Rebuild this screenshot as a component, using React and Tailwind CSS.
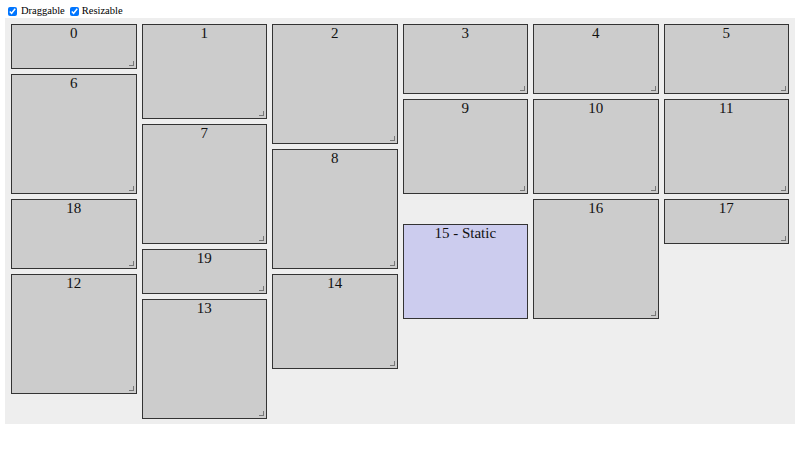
import React from "react";

const items = [
  { id: "0", cls: "col-start-1 row-start-1 row-span-2" },
  { id: "6", cls: "col-start-1 row-start-3 row-span-5" },
  { id: "18", cls: "col-start-1 row-start-8 row-span-3" },
  { id: "12", cls: "col-start-1 row-start-11 row-span-5" },
  { id: "1", cls: "col-start-2 row-start-1 row-span-4" },
  { id: "7", cls: "col-start-2 row-start-5 row-span-5" },
  { id: "19", cls: "col-start-2 row-start-10 row-span-2" },
  { id: "13", cls: "col-start-2 row-start-12 row-span-5" },
  { id: "2", cls: "col-start-3 row-start-1 row-span-5" },
  { id: "8", cls: "col-start-3 row-start-6 row-span-5" },
  { id: "14", cls: "col-start-3 row-start-11 row-span-4" },
  { id: "3", cls: "col-start-4 row-start-1 row-span-3" },
  { id: "9", cls: "col-start-4 row-start-4 row-span-4" },
  { id: "15 - Static", cls: "col-start-4 row-start-9 row-span-4", static: true },
  { id: "4", cls: "col-start-5 row-start-1 row-span-3" },
  { id: "10", cls: "col-start-5 row-start-4 row-span-4" },
  { id: "16", cls: "col-start-5 row-start-8 row-span-5" },
  { id: "5", cls: "col-start-6 row-start-1 row-span-3" },
  { id: "11", cls: "col-start-6 row-start-4 row-span-4" },
  { id: "17", cls: "col-start-6 row-start-8 row-span-2" },
];

function GridItem({ item }) {
  return (
    <div
      className={
        item.cls +
        " relative border border-[#333] text-center text-[15px] leading-[16px] text-[#111] " +
        (item.static ? "bg-[#cce]" : "bg-[#ccc]")
      }
    >
      {item.id}
      {!item.static && (
        <span className="absolute bottom-[2px] right-[2px] w-[5px] h-[5px] border-r border-b border-[#777]" />
      )}
    </div>
  );
}

export default function App() {
  return (
    <div className="w-[800px] h-[450px] bg-white font-['Liberation_Serif',serif] px-[5px]">
      {/* Controles */}
      <div className="flex items-center h-[18px] pt-[4px] text-[10.5px] text-black">
        <label className="flex items-center">
          <input type="checkbox" defaultChecked className="w-[9px] h-[9px] m-0 ml-[3px] mr-[4px]" />
          Draggable
        </label>
        <label className="flex items-center ml-[5px]">
          <input type="checkbox" defaultChecked className="w-[9px] h-[9px] m-0 mr-[3px]" />
          Resizable
        </label>
      </div>

      {/* Grid */}
      <div className="grid grid-cols-6 grid-rows-[repeat(16,20px)] gap-[5px] p-[6px] pb-[5px] bg-[#eee]">
        {items.map((item) => (
          <GridItem key={item.id} item={item} />
        ))}
      </div>
    </div>
  );
}
